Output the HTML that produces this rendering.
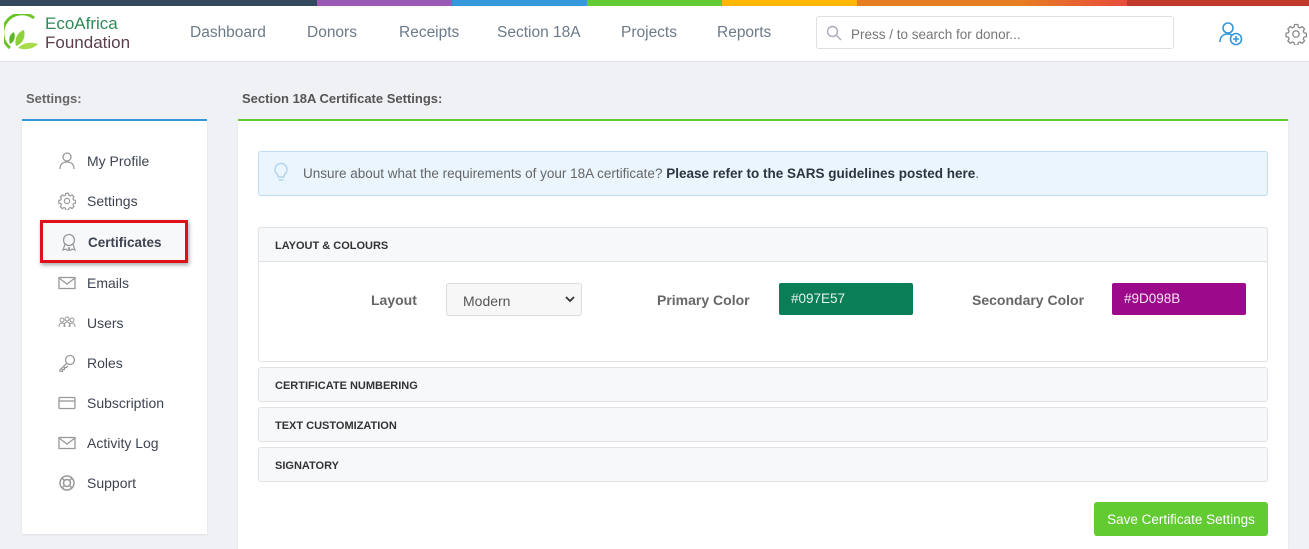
<!DOCTYPE html>
<html><head><meta charset="utf-8"><style>
*{box-sizing:border-box;margin:0;padding:0}
body{width:1309px;height:547px;overflow:hidden;background:#f0f1f5;font-family:"Liberation Sans",sans-serif;position:relative;color:#3d4451}
.a{position:absolute}
.bar{top:0;height:6px}
.nav{font-size:15.5px;color:#6c7a89;top:24px}
.side{font-size:14px;color:#3d4451}
.si{position:absolute;left:58px;width:18px;height:18px}
.hdr{background:#f7f8fa;border:1px solid #e0e2e6;border-radius:3px;left:258px;width:1010px;font-size:11px;font-weight:bold;color:#333;padding-left:16px;padding-top:1px}
.lbl{font-size:14px;font-weight:bold;color:#666;top:292px}
</style></head><body>
<div class="a bar" style="left:0;width:317px;background:#34495e"></div>
<div class="a bar" style="left:317px;width:135px;background:#9b59b6"></div>
<div class="a bar" style="left:452px;width:135px;background:#3498db"></div>
<div class="a bar" style="left:587px;width:135px;background:#62cb31"></div>
<div class="a bar" style="left:722px;width:135px;background:#ffb606"></div>
<div class="a bar" style="left:857px;width:270px;background:linear-gradient(90deg,#e67e22 0%,#e67e22 60%,#e74c3c 100%)"></div>
<div class="a bar" style="left:1127px;width:182px;background:#c0392b"></div>
<div class="a" style="left:0;top:6px;width:1309px;height:56px;background:#fff;border-bottom:1px solid #e4e5e9"></div>
<svg class="a" style="left:4px;top:14px" width="42" height="40" viewBox="0 0 42 40"><path d="M30 4 A17 17 0 1 0 6 34" fill="none" stroke="#6cc428" stroke-width="3"/><path d="M12 32 C10 24 14 18 20 16 C22 24 18 30 12 32Z" fill="#8fd13a"/><path d="M14 34 C20 28 28 28 34 30 C28 36 20 36 14 34Z" fill="#a6dc4a"/><path d="M6 30 C4 24 6 20 10 18 C12 24 10 28 6 30Z" fill="#5fb52a"/></svg>
<div class="a" style="left:45px;top:15px;font-size:17px;color:#2e8b57;line-height:18px">EcoAfrica</div>
<div class="a" style="left:45px;top:34px;font-size:17px;color:#5a3e4f;line-height:18px">Foundation</div>
<div class="a nav" style="left:190px">Dashboard</div>
<div class="a nav" style="left:307px">Donors</div>
<div class="a nav" style="left:399px">Receipts</div>
<div class="a nav" style="left:497px">Section 18A</div>
<div class="a nav" style="left:621px">Projects</div>
<div class="a nav" style="left:717px">Reports</div>
<div class="a" style="left:816px;top:16px;width:358px;height:33px;border:1px solid #dde0e4;border-radius:3px;background:#fff"></div>
<svg class="a" style="left:826px;top:25px" width="16" height="16" viewBox="0 0 16 16"><circle cx="6.5" cy="6.5" r="5" fill="none" stroke="#aab" stroke-width="1.4"/><path d="M10 10l5 5" stroke="#aab" stroke-width="1.4"/></svg>
<div class="a" style="left:851px;top:27px;font-size:13.5px;color:#777">Press / to search for donor...</div>
<svg class="a" style="left:1219px;top:21px" width="26" height="26" viewBox="0 0 26 26"><circle cx="9" cy="7" r="5" fill="none" stroke="#3498db" stroke-width="1.6"/><path d="M1 21c0-6 4-8 8-8 2 0 3 .4 4 1" fill="none" stroke="#3498db" stroke-width="1.6"/><circle cx="17" cy="18" r="5.5" fill="none" stroke="#3498db" stroke-width="1.6"/><path d="M17 15v6M14 18h6" stroke="#3498db" stroke-width="1.6"/></svg>
<svg class="a" style="left:1285px;top:23px" width="22" height="22" viewBox="0 0 24 24"><path d="M12 1.5l2 .3.6 2.6 1.8.9 2.3-1.4 2.6 2.6-1.4 2.3.8 1.8 2.6.6v3.6l-2.6.6-.8 1.8 1.4 2.3-2.6 2.6-2.3-1.4-1.8.8-.6 2.6h-3.6l-.6-2.6-1.8-.8-2.3 1.4-2.6-2.6 1.4-2.3-.8-1.8-2.6-.6v-3.6l2.6-.6.8-1.8-1.4-2.3 2.6-2.6 2.3 1.4 1.8-.9.6-2.6z" fill="none" stroke="#888" stroke-width="1.4"/><circle cx="12" cy="12" r="3.5" fill="none" stroke="#888" stroke-width="1.4"/></svg>

<div class="a" style="left:26px;top:91px;font-size:13px;font-weight:bold;color:#666">Settings:</div>
<div class="a" style="left:22px;top:119px;width:185px;height:415px;background:#fff;border-top:2px solid #3498db;box-shadow:0 1px 2px rgba(0,0,0,.08)"></div>
<div class="a" style="left:242px;top:91px;font-size:13px;font-weight:bold;color:#555">Section 18A Certificate Settings:</div>
<div class="a" style="left:238px;top:119px;width:1050px;height:430px;background:#fff;border-top:2px solid #62cb31;box-shadow:0 1px 2px rgba(0,0,0,.08)"></div>

<svg class="si" style="top:152px" viewBox="0 0 18 18"><circle cx="9" cy="5" r="4" fill="none" stroke="#999" stroke-width="1.3"/><path d="M2 17c0-5 3-7 7-7s7 2 7 7" fill="none" stroke="#999" stroke-width="1.3"/></svg>
<div class="a side" style="left:87px;top:153px">My Profile</div>
<svg class="si" style="top:192px" viewBox="0 0 24 24"><path d="M12 1.5l2 .3.6 2.6 1.8.9 2.3-1.4 2.6 2.6-1.4 2.3.8 1.8 2.6.6v3.6l-2.6.6-.8 1.8 1.4 2.3-2.6 2.6-2.3-1.4-1.8.8-.6 2.6h-3.6l-.6-2.6-1.8-.8-2.3 1.4-2.6-2.6 1.4-2.3-.8-1.8-2.6-.6v-3.6l2.6-.6.8-1.8-1.4-2.3 2.6-2.6 2.3 1.4 1.8-.9.6-2.6z" fill="none" stroke="#999" stroke-width="1.6"/><circle cx="12" cy="12" r="3.5" fill="none" stroke="#999" stroke-width="1.6"/></svg>
<div class="a side" style="left:87px;top:193px">Settings</div>
<div class="a" style="left:40px;top:220px;width:148px;height:43px;border:3px solid #e0101a;box-shadow:1px 2px 4px rgba(0,0,0,.35);background:#f7f8fa"></div>
<svg class="si" style="top:233px;left:60px" viewBox="0 0 18 18"><circle cx="9" cy="7" r="5.5" fill="none" stroke="#999" stroke-width="1.3"/><path d="M5 11l-2 6 3-1 2 2 1-4M13 11l2 6-3-1-2 2-1-4" fill="none" stroke="#999" stroke-width="1.2"/></svg>
<div class="a side" style="left:88px;top:235px;font-weight:bold;font-size:13.5px">Certificates</div>
<svg class="si" style="top:274px" viewBox="0 0 18 18"><rect x="1" y="3.5" width="16" height="11" fill="none" stroke="#999" stroke-width="1.3"/><path d="M1 4l8 6 8-6" fill="none" stroke="#999" stroke-width="1.3"/></svg>
<div class="a side" style="left:87px;top:275px">Emails</div>
<svg class="si" style="top:314px" viewBox="0 0 18 18"><circle cx="4" cy="6" r="2" fill="none" stroke="#999"/><circle cx="9" cy="5" r="2" fill="none" stroke="#999"/><circle cx="14" cy="6" r="2" fill="none" stroke="#999"/><path d="M1 13c0-3 1-4 3-4s3 1 3 4M6 13c0-3 1-5 3-5s3 2 3 5M11 13c0-3 1-4 3-4s3 1 3 4" fill="none" stroke="#999"/></svg>
<div class="a side" style="left:87px;top:315px">Users</div>
<svg class="si" style="top:354px" viewBox="0 0 18 18"><circle cx="12" cy="6" r="4.5" fill="none" stroke="#999" stroke-width="1.3"/><path d="M9 9l-7 7v1.5h2.5v-2h2v-2h2l1.5-1.5" fill="none" stroke="#999" stroke-width="1.3"/></svg>
<div class="a side" style="left:87px;top:355px">Roles</div>
<svg class="si" style="top:394px" viewBox="0 0 18 18"><rect x="1" y="3.5" width="16" height="11" rx="1" fill="none" stroke="#999" stroke-width="1.3"/><path d="M1 7h16" stroke="#999" stroke-width="1.3"/></svg>
<div class="a side" style="left:87px;top:395px">Subscription</div>
<svg class="si" style="top:434px" viewBox="0 0 18 18"><rect x="1" y="3.5" width="16" height="11" fill="none" stroke="#999" stroke-width="1.3"/><path d="M1 4l8 6 8-6" fill="none" stroke="#999" stroke-width="1.3"/></svg>
<div class="a side" style="left:87px;top:435px">Activity Log</div>
<svg class="si" style="top:474px" viewBox="0 0 18 18"><circle cx="9" cy="9" r="7" fill="none" stroke="#999" stroke-width="1.5"/><circle cx="9" cy="9" r="3.5" fill="none" stroke="#999" stroke-width="1.5"/><path d="M4 4l2.5 2.5M14 4l-2.5 2.5M4 14l2.5-2.5M14 14l-2.5-2.5" stroke="#999" stroke-width="1.5"/></svg>
<div class="a side" style="left:87px;top:475px">Support</div>

<div class="a" style="left:258px;top:151px;width:1010px;height:45px;background:#eaf5fe;border:1px solid #bfdcf0;border-radius:3px"></div>
<svg class="a" style="left:273px;top:162px" width="16" height="22" viewBox="0 0 16 22"><path d="M8 1.5a6 6 0 0 0-4 10.5c1 1 1.2 2 1.2 3h5.6c0-1 .2-2 1.2-3A6 6 0 0 0 8 1.5z" fill="none" stroke="#b5d3ea" stroke-width="1.5"/><path d="M5.5 18h5" stroke="#b5d3ea" stroke-width="1.5"/></svg>
<div class="a" style="left:303px;top:166px;font-size:13.5px;color:#666">Unsure about what the requirements of your 18A certificate? <b style="color:#2c3440">Please refer to the SARS guidelines posted here</b>.</div>

<div class="a" style="left:258px;top:227px;width:1010px;height:135px;border:1px solid #e0e2e6;border-radius:3px;background:#fff"></div>
<div class="a hdr" style="top:227px;height:35px;line-height:35px;border-radius:3px 3px 0 0">LAYOUT &amp; COLOURS</div>
<div class="a lbl" style="left:371px">Layout</div>
<div class="a" style="left:446px;top:283px;width:136px;height:33px;background:#f7f7f7;border:1px solid #ddd;border-radius:3px;font-size:14px;color:#555;padding:9px 0 0 16px">Modern</div>
<svg class="a" style="left:565px;top:295px" width="10" height="8" viewBox="0 0 10 8"><path d="M1 2l4 4 4-4" fill="none" stroke="#333" stroke-width="1.8"/></svg>
<div class="a lbl" style="left:657px">Primary Color</div>
<div class="a" style="left:779px;top:283px;width:134px;height:32px;background:#097e57;border-radius:2px;color:#e8f3ee;font-size:13.5px;padding:8px 0 0 12px">#097E57</div>
<div class="a lbl" style="left:972px">Secondary Color</div>
<div class="a" style="left:1112px;top:283px;width:134px;height:32px;background:#9d098b;border-radius:2px;color:#f3e6f1;font-size:13.5px;padding:8px 0 0 12px">#9D098B</div>
<div class="a hdr" style="top:367px;height:35px;line-height:35px">CERTIFICATE NUMBERING</div>
<div class="a hdr" style="top:407px;height:35px;line-height:35px">TEXT CUSTOMIZATION</div>
<div class="a hdr" style="top:447px;height:35px;line-height:35px">SIGNATORY</div>
<div class="a" style="left:1094px;top:502px;width:174px;height:34px;background:#62cb31;border-radius:3px;color:#fff;font-size:13.5px;text-align:center;line-height:35px">Save Certificate Settings</div>
</body></html>
